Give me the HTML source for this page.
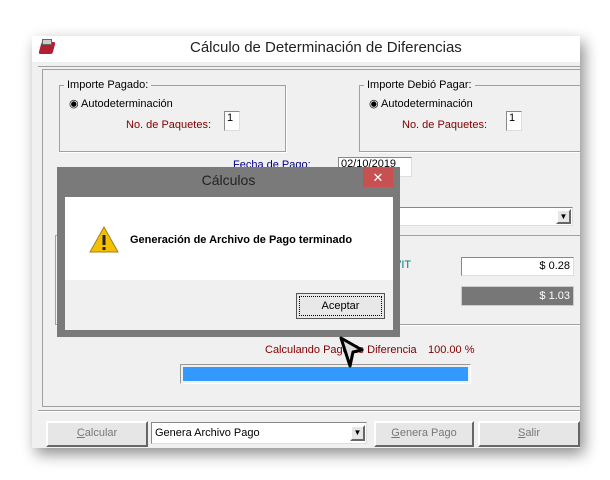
<!DOCTYPE html>
<html><head><style>
*{box-sizing:border-box}
body{margin:0;width:610px;height:480px;background:#fff;position:relative;overflow:hidden;font-family:"Liberation Sans",sans-serif;font-size:11px}
.a{position:absolute}
.win{left:32px;top:36px;width:548px;height:412px;background:#f0f0f0;box-shadow:4px 6px 14px rgba(0,0,0,.45);overflow:hidden}
.gb{border:1px solid #a0a0a0;box-shadow:1px 1px 0 #fff}
.lg{background:#f0f0f0;padding:0 3px;color:#000}
.in{background:#fff;border:1px solid #888;border-right-color:#ddd;border-bottom-color:#ddd}
.btn{background:#e6e6e6;border:2px solid;border-color:#fff #666 #666 #fff;text-align:center;line-height:21px;color:#777}
.red{color:#800000}
</style></head><body>
<div class="a win">
 <div class="a" style="left:0;top:0;width:548px;height:26px;background:#fff"></div>
 <div class="a" style="left:8px;top:6px;width:14px;height:12px;background:#b02030;border-radius:2px;transform:skewX(-15deg)"></div>
 <div class="a" style="left:10px;top:3px;width:10px;height:6px;background:#ccc;border:1px solid #666"></div>
 <div class="a" style="left:158px;top:3px;font-size:15px;color:#222">Cálculo de Determinación de Diferencias</div>
 <div class="a" style="left:6px;top:30px;width:542px;height:1px;background:#a0a0a0"></div>
 <div class="a" style="left:10px;top:33px;width:538px;height:338px;border:1px solid #a0a0a0;border-right:none"></div>
 <div class="a gb" style="left:27px;top:49px;width:227px;height:67px"></div>
 <div class="a lg" style="left:32px;top:43px">Importe Pagado:</div>
 <div class="a" style="left:37px;top:61px">◉ Autodeterminación</div>
 <div class="a red" style="left:94px;top:83px">No. de Paquetes:</div>
 <div class="a in" style="left:192px;top:75px;width:16px;height:20px;padding-left:2px">1</div>
 <div class="a gb" style="left:327px;top:49px;width:230px;height:67px"></div>
 <div class="a lg" style="left:332px;top:43px">Importe Debió Pagar:</div>
 <div class="a" style="left:337px;top:61px">◉ Autodeterminación</div>
 <div class="a red" style="left:370px;top:83px">No. de Paquetes:</div>
 <div class="a in" style="left:474px;top:75px;width:16px;height:20px;padding-left:2px">1</div>
 <div class="a" style="left:201px;top:123px;color:#000080">Fecha de Pago:</div>
 <div class="a in" style="left:306px;top:121px;width:74px;height:20px;padding-left:2px">02/10/2019</div>
 <div class="a in" style="left:366px;top:171px;width:175px;height:19px"></div>
 <div class="a btn" style="left:524px;top:173px;width:15px;height:15px;line-height:12px;font-size:8px;color:#000">▼</div>
 <div class="a gb" style="left:23px;top:199px;width:525px;height:90px;border-right:none"></div>
 <div class="a" style="left:362px;top:223px;color:#008080">VIT</div>
 <div class="a in" style="left:429px;top:221px;width:113px;height:19px;text-align:right;padding-right:3px;line-height:17px">$ 0.28</div>
 <div class="a red" style="left:362px;top:252px">r:</div>
 <div class="a" style="left:429px;top:250px;width:113px;height:20px;background:#777;color:#fff;text-align:right;padding-right:3px;line-height:18px;border:1px solid #ccc">$ 1.03</div>
 <div class="a red" style="left:233px;top:308px">Calculando Pago de Diferencia</div>
 <div class="a red" style="left:396px;top:308px">100.00 %</div>
 <div class="a" style="left:148px;top:328px;width:291px;height:20px;border:1px solid #999;border-right-color:#fff;border-bottom-color:#fff;padding:2px"><div style="width:100%;height:100%;background:#3399ff"></div></div>
 <div class="a" style="left:6px;top:374px;width:542px;height:2px;border-top:1px solid #a0a0a0;border-bottom:1px solid #fff"></div>
 <div class="a btn" style="left:14px;top:385px;width:102px;height:26px"><u>C</u>alcular</div>
 <div class="a in" style="left:119px;top:386px;width:216px;height:22px;line-height:20px;padding-left:3px;color:#000">Genera Archivo Pago</div>
 <div class="a btn" style="left:318px;top:389px;width:15px;height:16px;line-height:12px;font-size:8px;color:#000">▼</div>
 <div class="a btn" style="left:342px;top:385px;width:100px;height:26px"><u>G</u>enera Pago</div>
 <div class="a btn" style="left:446px;top:385px;width:102px;height:26px"><u>S</u>alir</div>
</div>
<!-- dialog -->
<div class="a" style="left:57px;top:167px;width:343px;height:170px;background:#7a7a7a">
 <div class="a" style="left:0;top:5px;width:343px;text-align:center;font-size:14px;color:#222">Cálculos</div>
 <div class="a" style="left:306px;top:1px;width:30px;height:19px;background:#c75050;color:#fff;text-align:center;line-height:19px;font-size:13px">✕</div>
 <div class="a" style="left:8px;top:30px;width:328px;height:133px;background:#f0f0f0">
  <div class="a" style="left:0;top:0;width:328px;height:83px;background:#fff"></div>
  <svg class="a" style="left:24px;top:29px" width="30" height="28" viewBox="0 0 30 28"><path d="M15 1 L29 26 L1 26 Z" fill="#f5c000" stroke="#a08020"/><rect x="13.5" y="9" width="3" height="10" fill="#222"/><rect x="13.5" y="21" width="3" height="3" fill="#222"/></svg>
  <div class="a" style="left:65px;top:37px;font-weight:bold;color:#000;font-size:11px">Generación de Archivo de Pago terminado</div>
  <div class="a" style="left:231px;top:96px;width:89px;height:26px;border:1px solid #555;background:#e8e8e8;padding:2px"><div style="border:1px dotted #000;height:100%;text-align:center;line-height:18px;color:#000">Aceptar</div></div>
 </div>
</div>
<svg class="a" style="left:338px;top:336px" width="30" height="34" viewBox="0 0 30 34"><path d="M3 2 L24 14 L15 16 L12 30 Z" fill="#ddd" stroke="#000" stroke-width="3" stroke-linejoin="round"/></svg>
</body></html>
